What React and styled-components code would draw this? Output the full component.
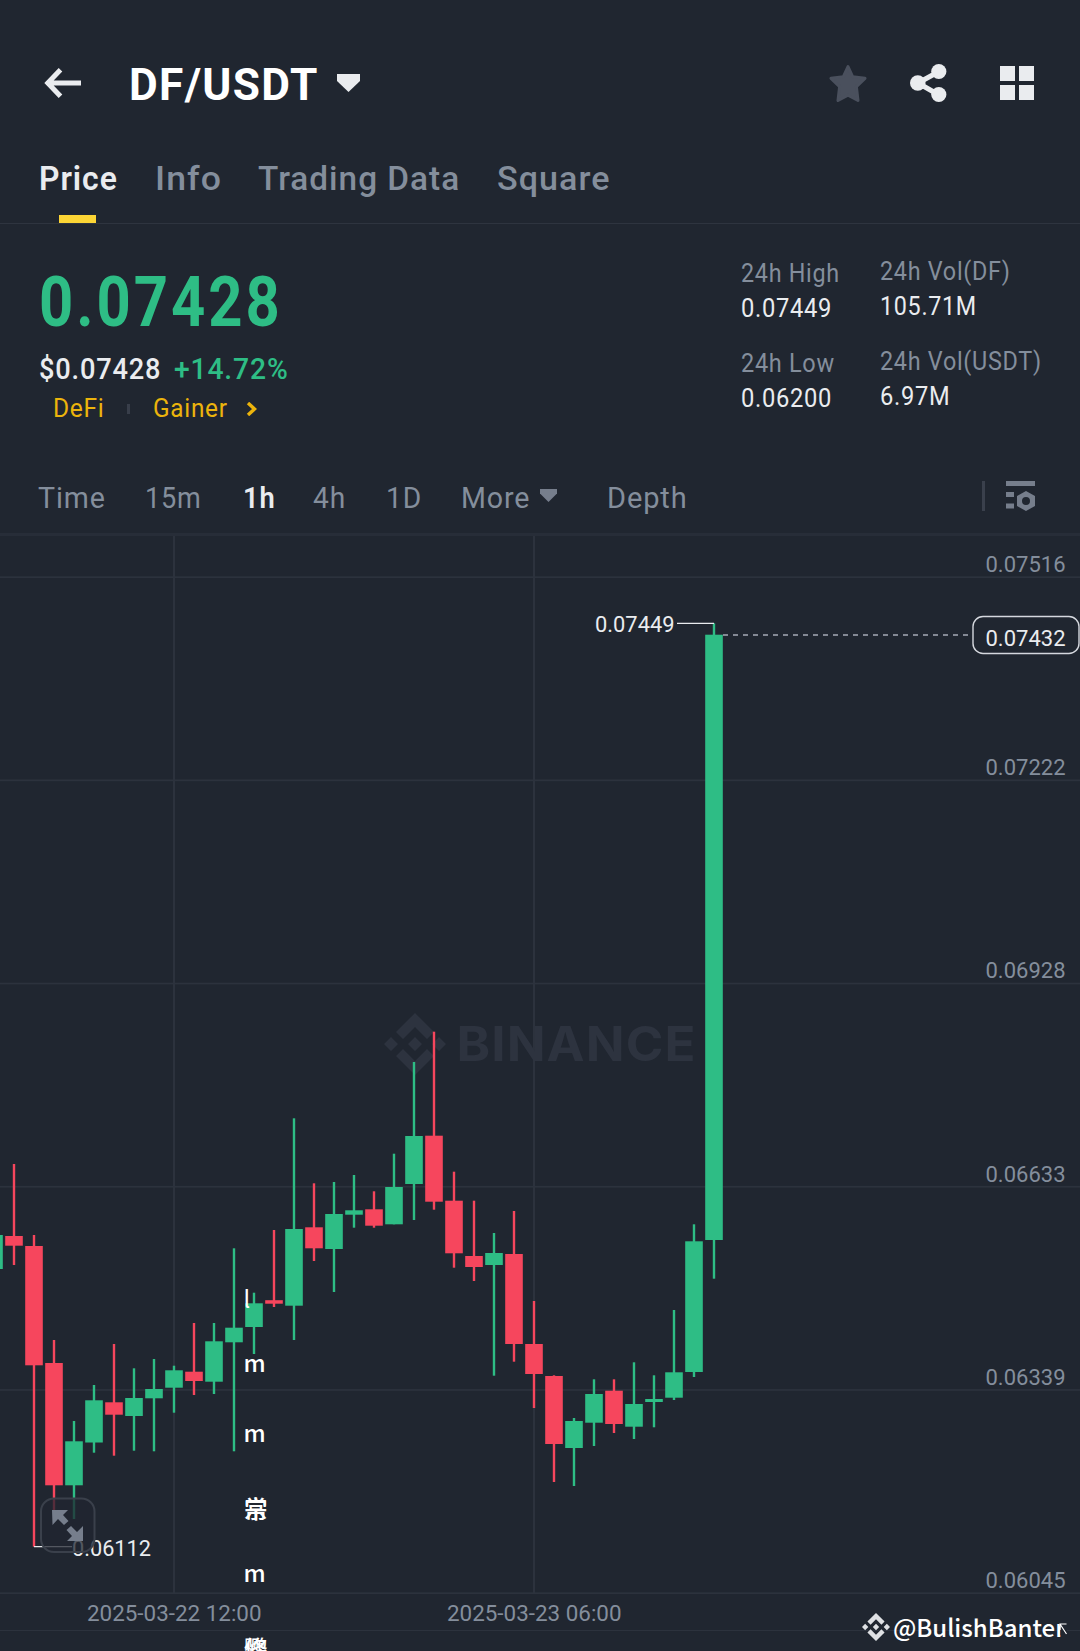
import React, { useLayoutEffect, useRef, useState } from 'react';
import styled, { createGlobalStyle } from 'styled-components';

const colors = {
    background: '#202630',
    grid: '#2c323d',
    green: '#2ebd85',
    red: '#f6465d',
    text: '#eaecef',
    muted: '#848e9c',
    icon: '#767e8c',
    yellow: '#fcd535',
    link: '#ecb40c'
};

const GlobalStyle = createGlobalStyle`
    html, body {
        background: ${colors.background};
        margin:0;
        padding:0;
    }

    * {
        box-sizing: border-box;
    }
`;

const Screen = styled.main`
    background: ${colors.background};
    color: ${colors.text};
    display:flex;
    flex-direction: column;
    font-family: Roboto, "Liberation Sans", sans-serif;
    height:1651px;
    overflow:hidden;
    position: relative;
    width:1080px;
`;

const FitBox = styled.span`
    color: ${props => props.$color || 'inherit'};
    display:block;
    font-size: ${props => props.$size}px;
    font-weight: ${props => props.$weight || 400};
    letter-spacing: ${props => props.$spacing || '0.03em'};
    line-height: ${props => props.$line || 40}px;
    white-space:nowrap;
    width: ${props => props.$width}px;
`;

const FitInner = styled.span`
    display:inline-block;
    transform-origin: left center;
`;

// stretches or narrows a line of text to a given width
const Fit = ({ width, children, ...rest }) => {
    const ref = useRef(null);
    const [scale, setScale] = useState(1);

    useLayoutEffect(() => {
        setScale(width / ref.current.offsetWidth);
    }, [width, children]);

    return (
        <FitBox $width={width} {...rest}>
            <FitInner ref={ref} style={{ transform: `scaleX(${scale})` }}>{children}</FitInner>
        </FitBox>
    );
};

// HEADER

const Header = styled.header`
    align-items:center;
    display:flex;
    height:130px;
    padding:36px 46px 0 44px;
`;

const HeaderTitle = styled.div`
    align-items:center;
    display:flex;
    flex:1;
    gap:18px;
    margin-left:48px;
    padding-top:5px;

    svg {
        margin-top:-5px;
    }
`;

const HeaderActions = styled.div`
    align-items:center;
    display:flex;

    svg + svg {
        margin-left:43px;
    }

    svg:last-child {
        margin-left:53px;
    }
`;

const Tabs = styled.nav`
    border-bottom:1px solid #2e343f;
    display:grid;
    grid-template-columns: 116px 103px 239px 120px;
    height:94px;
    padding:29px 0 0 39px;
`;

const Tab = styled.div`
    color: ${props => props.$active ? colors.text : colors.muted};
    position: relative;

    &::after {
        background: ${props => props.$active ? colors.yellow : 'transparent'};
        bottom:0;
        content:'';
        height:8px;
        left:20px;
        position: absolute;
        width:37px;
    }
`;

// TICKER

const Ticker = styled.section`
    display:flex;
    height:232px;
    justify-content: space-between;
    padding:33px 36px 0 39px;
`;

const TickerMain = styled.div`
    display:flex;
    flex-direction: column;
`;

const ChangeRow = styled.div`
    display:flex;
    gap:13px;
    margin-top:2px;
`;

const TagRow = styled.div`
    align-items:center;
    color: ${colors.link};
    display:flex;
    margin-left:14px;
`;

const TagDivider = styled.i`
    background: #383e4a;
    height:10px;
    margin:0 23px 0 22px;
    width:3px;
`;

const TagArrow = styled.svg`
    margin-left:18px;
`;

const TickerStats = styled.div`
    display:grid;
    grid-template-columns: 139px 164px;
    margin-top:-1px;
`;

const StatColumn = styled.div`
    display:flex;
    flex-direction: column;
    gap:20px;
    margin-top: ${props => props.$top}px;
`;

// INTERVALS

const Intervals = styled.nav`
    align-items:center;
    border-bottom:3px solid #272d38;
    display:flex;
    height:80px;
    justify-content: space-between;
    padding:6px 45px 0 38px;
`;

const IntervalList = styled.div`
    align-items:center;
    color: ${colors.muted};
    display:grid;
    grid-template-columns: 107px 98px 70px 73px 75px 79px 67px 84px;

    svg {
        margin-top:-5px;
    }
`;

const IntervalTools = styled.div`
    align-items:center;
    display:flex;
    gap:21px;
    padding-bottom:3px;
`;

const ToolDivider = styled.i`
    background: #3a404c;
    height:30px;
    width:3px;
`;

const Chart = styled.svg`
    display:block;
    flex:none;
`;

const Credit = styled.div`
    align-items:center;
    color: #fff;
    display:flex;
    font-family: "Noto Sans CJK SC", "Noto Sans", sans-serif;
    gap:3px;
    left:862px;
    position: absolute;
    top:1607px;
`;

const Pointer = styled.svg`
    left:197px;
    position: absolute;
    top:16px;
`;

const tabs = [
    { label: 'Price', width: 79, active: true },
    { label: 'Info', width: 67 },
    { label: 'Trading Data', width: 202 },
    { label: 'Square', width: 113 }
];

const stats = [
    [
        { label: '24h High', labelWidth: 99, value: '0.07449', valueWidth: 91 },
        { label: '24h Low', labelWidth: 94, value: '0.06200', valueWidth: 91 }
    ],
    [
        { label: '24h Vol(DF)', labelWidth: 131, value: '105.71M', valueWidth: 97 },
        { label: '24h Vol(USDT)', labelWidth: 162, value: '6.97M', valueWidth: 70 }
    ]
];

const intervals = [
    { label: 'Time', width: 68 },
    { label: '15m', width: 57 },
    { label: '1h', width: 33, active: true },
    { label: '4h', width: 33 },
    { label: '1D', width: 36 },
    { label: 'More', width: 69 }
];

// [x, up, high, low, body top, body bottom]
const candles = [
    [-6, 1, 1235, 1269, 1235, 1269],
    [14, 0, 1164, 1265, 1236, 1245.7],
    [34, 0, 1235, 1546.7, 1246, 1365.3],
    [54, 0, 1340, 1510, 1363, 1485.3],
    [74, 1, 1421, 1519, 1441.3, 1485.3],
    [94, 1, 1385, 1452.7, 1400.3, 1442.5],
    [114, 0, 1344, 1455.7, 1402.3, 1414.7],
    [134, 1, 1368.3, 1450.7, 1398, 1416],
    [154, 1, 1359, 1451.3, 1389, 1398.3],
    [174, 1, 1365.7, 1412.7, 1370.3, 1387.7],
    [194, 0, 1323, 1395, 1371.7, 1381],
    [214, 1, 1323, 1394, 1341.3, 1381.7],
    [234, 1, 1248.3, 1451.3, 1327.7, 1342.3],
    [254, 1, 1292.7, 1354, 1303.3, 1327],
    [274, 0, 1230, 1307, 1300.2, 1303.7],
    [294, 1, 1118.3, 1340, 1229, 1305.7],
    [314, 0, 1183.3, 1261, 1227.3, 1248.3],
    [334, 1, 1182, 1292, 1214, 1249],
    [354, 1, 1175, 1227.7, 1210.3, 1214.7],
    [374, 0, 1191.3, 1227.7, 1209.3, 1225.7],
    [394, 1, 1153.7, 1224.3, 1187, 1224.3],
    [414, 1, 1062, 1220, 1136, 1184],
    [434, 0, 1031.7, 1209.7, 1135.7, 1201.7],
    [454, 0, 1171.7, 1267.7, 1200.7, 1253.3],
    [474, 0, 1200.7, 1281, 1256, 1267],
    [494, 1, 1233, 1375.7, 1253, 1265],
    [514, 0, 1211, 1361.7, 1254, 1344],
    [534, 0, 1301, 1408, 1344, 1374],
    [554, 0, 1375.3, 1482, 1376, 1444],
    [574, 1, 1418, 1486, 1421, 1448],
    [594, 1, 1379.3, 1446, 1394, 1422.7],
    [614, 0, 1379.3, 1433, 1390.7, 1424],
    [634, 1, 1362.3, 1439, 1404, 1426.7],
    [654, 1, 1375.3, 1427.3, 1399, 1402],
    [674, 1, 1310, 1400, 1372.3, 1397.7],
    [694, 1, 1224.3, 1377, 1241.3, 1372],
    [714, 1, 623.3, 1278.7, 634.7, 1240]
];

const priceAxis = ['0.07516', '0.07222', '0.06928', '0.06633', '0.06339', '0.06045'];

const BackIcon = () => (
    <svg width="37" height="30" viewBox="0 0 37 30" fill="none" stroke={colors.text} strokeWidth="5">
        <path d="M3 15h34M16.5 1.8L3.8 15l12.7 13.2" />
    </svg>
);

const StarIcon = () => (
    <svg width="38" height="40" viewBox="0 0 38 40">
        <path
            d="M19 3.5l4.6 10.2 12.4 1.6-8.6 8.3 1.6 13.9-10-5.300L9 37.5l1.6-13.9L2 15.300l12.400-1.600z"
            fill="#4a505d"
            stroke="#4a505d"
            strokeWidth="3"
            strokeLinejoin="round" />
    </svg>
);

const ShareIcon = () => (
    <svg width="37" height="40" viewBox="0 0 37 40" fill={colors.text}>
        <path d="M8 20L29 8.5M8 20l21 12" stroke={colors.text} strokeWidth="5" />
        <circle cx="7.8" cy="20" r="7.8" />
        <circle cx="28.8" cy="8.5" r="7.6" />
        <circle cx="28.8" cy="31.5" r="7.6" />
    </svg>
);

const GridIcon = () => (
    <svg width="34" height="34" viewBox="0 0 34 34" fill={colors.text}>
        <path d="M0 0h15v15H0zM19 0h15v15H19zM0 19h15v15H0zM19 19h15v15H19z" />
    </svg>
);

const IndicatorIcon = () => (
    <svg width="29" height="30" viewBox="0 0 29 30" fill={colors.icon}>
        <path d="M0 0h29v5H0zM0 11h8v5H0zM0 22.5h8v5H0z" />
        <path fillRule="evenodd" d="M20 10l9 5v10l-9 5-9-5V15zM20 16a4 4 0 1 0 0 8a4 4 0 1 0 0-8z" />
    </svg>
);

// diamond mark, drawn on a 62 x 62 field
const BinanceMark = () => (
    <g>
        <path d="M31 0l19 19-7 7-12-12-12 12-7-7z" />
        <path d="M31 62l19-19-7-7-12 12-12-12-7 7z" />
        <path d="M7 24l7 7-7 7-7-7zM31 24l7 7-7 7-7-7zM55 24l7 7-7 7-7-7z" />
    </g>
);

const PriceChart = () => (
    <Chart width="1080" height="1115" viewBox="0 536 1080 1115" fontFamily="Roboto, sans-serif" fontSize="22.5">
        <g fill={colors.grid}>
            {priceAxis.map((price, i) => (
                <rect key={price} x="0" y={576.3 + i * 203.2} width="1080" height="1.7" />
            ))}
            <rect x="173" y="536" width="2" height="1057" />
            <rect x="533" y="536" width="2" height="1057" />
            <rect x="0" y="1630" width="1080" height="1" />
        </g>

        <g fill="#2d333f">
            <g transform="translate(384 1013)"><BinanceMark /></g>
            <text
                x="456.5"
                y="1061"
                fontFamily="Inter, sans-serif"
                fontSize="47.5"
                fontWeight="700"
                letterSpacing="1"
                textLength="240"
                lengthAdjust="spacingAndGlyphs">BINANCE</text>
        </g>

        {candles.map(([x, up, high, low, top, bottom]) => (
            <g key={x} fill={up ? colors.green : colors.red}>
                <rect x={x - 1.2} y={high} width="2.4" height={low - high} />
                <rect x={x - 8.8} y={top} width="17.6" height={bottom - top} />
            </g>
        ))}

        <g fill={colors.muted}>
            {priceAxis.map((price, i) => (
                <text
                    key={price}
                    x="985.5"
                    y={572 + i * 203.2}
                    textLength="80"
                    lengthAdjust="spacingAndGlyphs">{price}</text>
            ))}
            <text x="87" y="1621" textLength="174.5" lengthAdjust="spacingAndGlyphs">2025-03-22 12:00</text>
            <text x="447" y="1621" textLength="174.5" lengthAdjust="spacingAndGlyphs">2025-03-23 06:00</text>
        </g>

        {/* high, low and last price marks */}
        <path d="M677 623.3h37M34 1546.6h38" stroke="#eaecef" strokeWidth="1.3" />
        <path d="M723 635h246" stroke="#a5abb5" strokeWidth="1.6" strokeDasharray="5 5" />
        <rect x="973" y="616.5" width="106" height="37" rx="10" fill={colors.background} stroke="#d5d8de" strokeWidth="1.4" />
        <g fill={colors.text}>
            <text x="595" y="631.7" textLength="79.5" lengthAdjust="spacingAndGlyphs">0.07449</text>
            <text x="985.5" y="645.8" textLength="80" lengthAdjust="spacingAndGlyphs">0.07432</text>
            <text x="72" y="1556" textLength="79" lengthAdjust="spacingAndGlyphs">0.06112</text>
        </g>

        {/* full screen button */}
        <rect x="41" y="1498.5" width="53.5" height="53.5" rx="13" fill="#202630" fillOpacity="0.75" stroke="#3a404b" strokeWidth="2" />
        <g fill={colors.icon}>
            <path d="M52 1510h16l-5 5 5.500 6-4.500 4-6-6-5.500 6z" />
            <path d="M83 1541H67l5-5-5.500-6 4.500-4 6 6 6-6z" />
        </g>

        <g fill="#fff" fontFamily='"Noto Sans CJK SC", sans-serif' fontSize="23.5">
            <text x="243.5" y="1307.5">l</text>
            <g fontWeight="500">
                <text x="243.5" y="1372">m</text>
                <text x="243.5" y="1442">m</text>
                <text x="244" y="1518">常</text>
                <text x="244" y="1518">宗</text>
                <text x="243.5" y="1582">m</text>
                <text x="244" y="1658">鹦</text>
                <text x="244" y="1658">修</text>
            </g>
        </g>
    </Chart>
);

const App = () => {
    return (
        <Screen>
            <GlobalStyle />

            <Header>
                <BackIcon />
                <HeaderTitle>
                    <Fit width={190} $size={43.5} $weight={700} $color="#fff">DF/USDT</Fit>
                    <svg width="23" height="18" viewBox="0 0 23 18" fill={colors.text}>
                        <path d="M0 0h23v7L11.5 18 0 7z" />
                    </svg>
                </HeaderTitle>
                <HeaderActions>
                    <StarIcon />
                    <ShareIcon />
                    <GridIcon />
                </HeaderActions>
            </Header>

            <Tabs>
                {tabs.map(tab => (
                    <Tab key={tab.label} $active={tab.active}>
                        <Fit width={tab.width} $size={33.5} $weight={tab.active ? 600 : 500}>{tab.label}</Fit>
                    </Tab>
                ))}
            </Tabs>

            <Ticker>
                <TickerMain>
                    <Fit width={244} $size={71} $weight={700} $spacing="0.05em" $line={90} $color={colors.green}>0.07428</Fit>
                    <ChangeRow>
                        <Fit width={122} $size={29} $weight={500}>$0.07428</Fit>
                        <Fit width={115} $size={29} $weight={500} $color={colors.green}>+14.72%</Fit>
                    </ChangeRow>
                    <TagRow>
                        <Fit width={52} $size={25}>DeFi</Fit>
                        <TagDivider />
                        <Fit width={75} $size={25}>Gainer</Fit>
                        <TagArrow width="11" height="14" viewBox="0 0 11 14" fill="none" stroke={colors.link} strokeWidth="3.4">
                            <path d="M2 1l6.5 6L2 13" />
                        </TagArrow>
                    </TagRow>
                </TickerMain>

                <TickerStats>
                    {stats.map((column, i) => (
                        <StatColumn key={i} $top={i === 0 ? 0 : -2}>
                            {column.map(stat => (
                                <div key={stat.label}>
                                    <Fit width={stat.labelWidth} $size={25} $line={35} $color={colors.muted}>{stat.label}</Fit>
                                    <Fit width={stat.valueWidth} $size={25} $line={35}>{stat.value}</Fit>
                                </div>
                            ))}
                        </StatColumn>
                    ))}
                </TickerStats>
            </Ticker>

            <Intervals>
                <IntervalList>
                    {intervals.map(item => (
                        <Fit
                            key={item.label}
                            width={item.width}
                            $size={29}
                            $weight={item.active ? 600 : 400}
                            $color={item.active ? colors.text : colors.muted}>{item.label}</Fit>
                    ))}
                    <svg width="17" height="13" viewBox="0 0 17 13" fill={colors.icon}>
                        <path d="M0 0h17v4.5L8.5 13 0 4.5z" />
                    </svg>
                    <Fit width={81} $size={29}>Depth</Fit>
                </IntervalList>
                <IntervalTools>
                    <ToolDivider />
                    <IndicatorIcon />
                </IntervalTools>
            </Intervals>

            <PriceChart />

            <Credit>
                <svg width="28" height="28" viewBox="0 0 62 62" fill="#dfe1e4"><BinanceMark /></svg>
                <Fit width={172} $size={24} $weight={500} $spacing="0">@BulishBanter</Fit>
                <Pointer width="8" height="12" viewBox="0 0 8 12" fill="none" stroke="#fff" strokeWidth="1.2">
                    <path d="M1.500 0H8V12H1.500z" fill={colors.background} stroke="none" />
                    <path d="M7.500 1H1v6M1 1l6.500 10" />
                </Pointer>
            </Credit>
        </Screen>
    );
};

export default App;
